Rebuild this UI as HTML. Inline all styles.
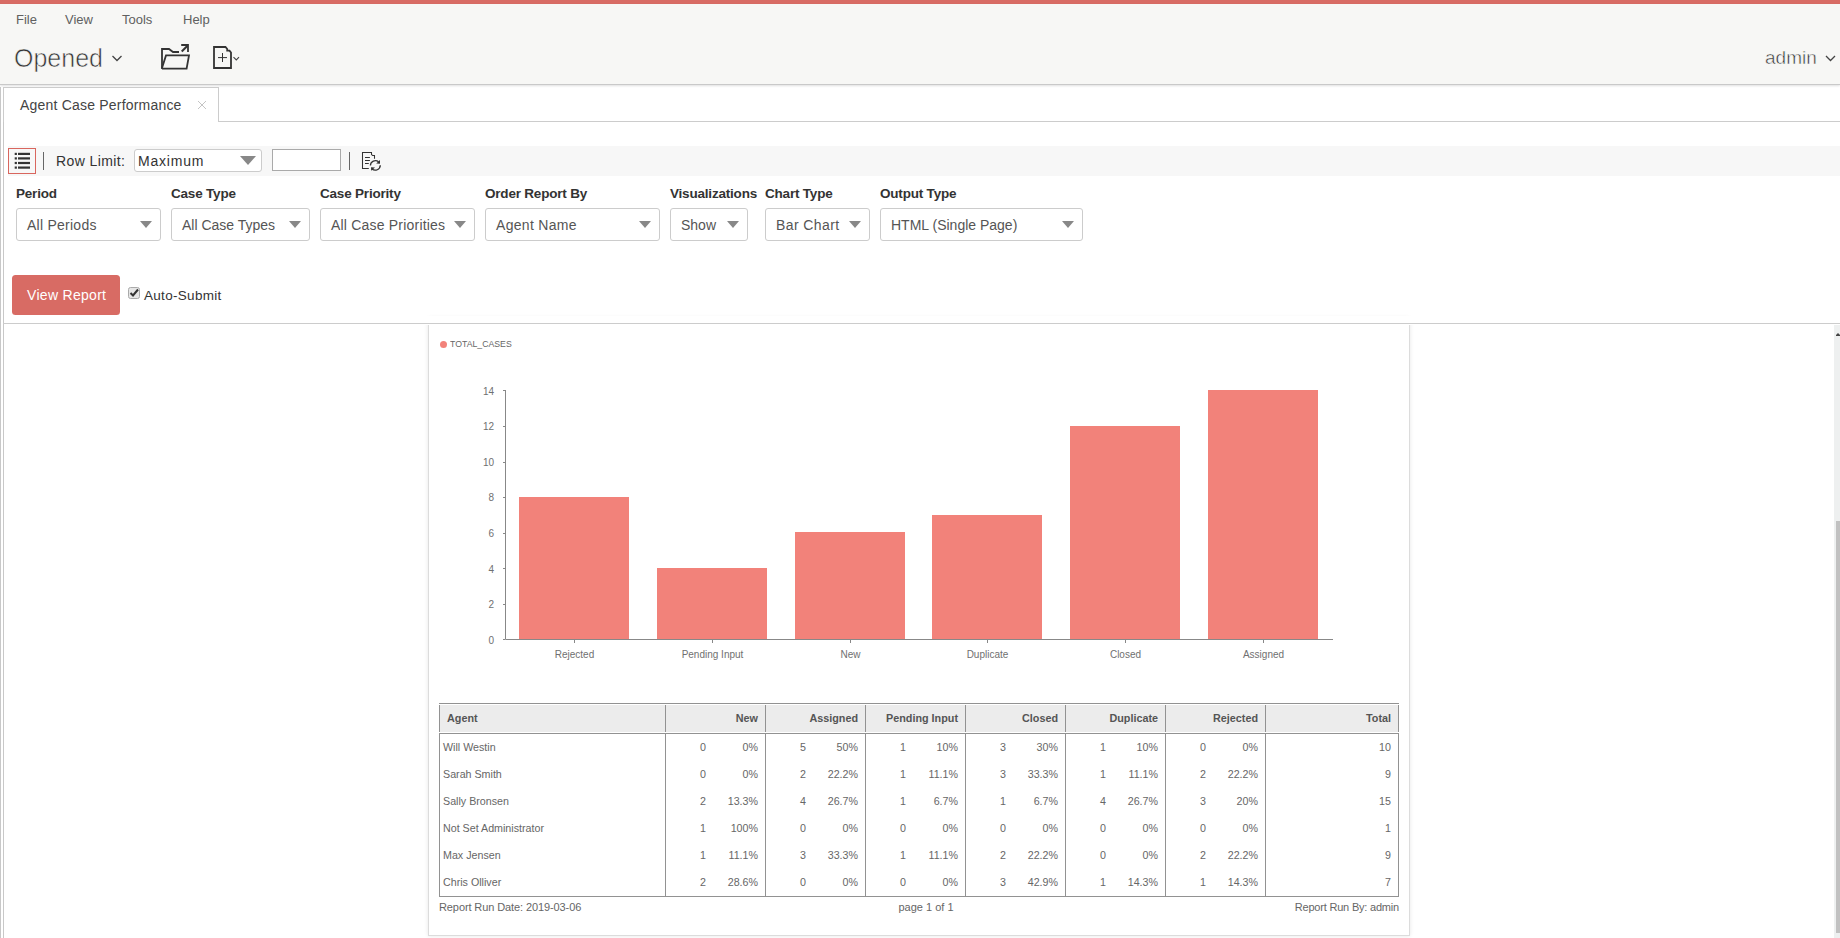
<!DOCTYPE html>
<html><head><meta charset="utf-8">
<style>
*{margin:0;padding:0;box-sizing:border-box}
html,body{width:1840px;height:938px;overflow:hidden;background:#fff;font-family:"Liberation Sans",sans-serif;color:#333}
.a{position:absolute;white-space:nowrap;line-height:1}
#topbar{position:absolute;left:0;top:0;width:1840px;height:4px;background:#d86b64}
#hdr{position:absolute;left:0;top:4px;width:1840px;height:81px;background:#f7f7f5;border-bottom:1px solid #c9c9c9;box-shadow:0 1px 2px rgba(0,0,0,.12)}
.menu{font-size:13px;color:#606060}
.sel{position:absolute;background:#fff;border:1px solid #ccc;border-radius:3px}
.sel .t{position:absolute;white-space:nowrap;line-height:1;font-size:14px;color:#555}
.tri{position:absolute;width:0;height:0;border-left:6px solid transparent;border-right:6px solid transparent;border-top:7px solid #888}
.lbl{font-size:13.5px;font-weight:bold;color:#333;letter-spacing:-0.2px}
</style></head><body>
<div id="topbar"></div>
<div id="hdr"></div>
<div class="a menu" style="left:16px;top:13px">File</div>
<div class="a menu" style="left:65px;top:13px">View</div>
<div class="a menu" style="left:122px;top:13px">Tools</div>
<div class="a menu" style="left:183px;top:13px">Help</div>
<div class="a" style="left:14px;top:45.5px;font-size:25px;color:#333;-webkit-text-stroke:0.6px #f7f7f5">Opened</div>
<svg class="a" style="left:110px;top:53px" width="14" height="10" viewBox="0 0 14 10"><path d="M2.5 3 L7 7.5 L11.5 3" fill="none" stroke="#444" stroke-width="1.3"/></svg>
<!-- folder icon -->
<svg class="a" style="left:158px;top:42px" width="34" height="30" viewBox="0 0 34 30">
<path d="M4 27 V7 H11 L15 10 H21" fill="none" stroke="#333" stroke-width="1.8" stroke-linejoin="miter"/>
<path d="M4 26.6 H28.6 L31 13.4 H8 L4 26" fill="none" stroke="#333" stroke-width="1.8" stroke-linejoin="miter"/>
<path d="M23.7 9.5 L29.5 3.7" fill="none" stroke="#333" stroke-width="2"/>
<path d="M23.2 3 H30 V10" fill="none" stroke="#333" stroke-width="1.8"/>
</svg>
<!-- new doc icon -->
<svg class="a" style="left:210px;top:42px" width="34" height="30" viewBox="0 0 34 30">
<path d="M4 26 V5 H15.5 L17.2 7 V8.7 H19.5 L21 10.5 V26 Z" fill="none" stroke="#333" stroke-width="1.8" stroke-linejoin="miter"/>
<path d="M8 15.6 H17 M12.5 11 V20" fill="none" stroke="#333" stroke-width="1"/>
<path d="M23.5 15.2 L26.3 18 L29 15.2" fill="none" stroke="#444" stroke-width="1.1"/>
</svg>
<div class="a" style="left:1765px;top:48px;font-size:19px;color:#333;-webkit-text-stroke:0.5px #f7f7f5">admin</div>
<svg class="a" style="left:1823px;top:52px" width="14" height="12" viewBox="0 0 14 12"><path d="M3 4 L7.5 8.5 L12 4" fill="none" stroke="#444" stroke-width="1.3"/></svg>

<!-- left page borders -->
<div style="position:absolute;left:0;top:87px;width:1px;height:851px;background:#c8c8c8"></div>
<div style="position:absolute;left:3px;top:87px;width:1px;height:851px;background:#c8c8c8"></div>

<!-- tab -->
<div style="position:absolute;left:3px;top:87px;width:216px;height:35px;border:1px solid #ccc;border-bottom:none;background:#fff"></div>
<div style="position:absolute;left:218px;top:121px;width:1622px;height:1px;background:#ccc"></div>
<div class="a" style="left:20px;top:98px;font-size:14px;color:#444;letter-spacing:0.2px">Agent Case Performance</div>
<svg class="a" style="left:197px;top:100px" width="10" height="10" viewBox="0 0 10 10"><path d="M1 1 L9 9 M9 1 L1 9" stroke="#c4c4c4" stroke-width="1"/></svg>

<!-- toolbar -->
<div style="position:absolute;left:8px;top:146px;width:1832px;height:30px;background:#f7f7f7"></div>
<div style="position:absolute;left:8px;top:148px;width:28px;height:26px;border:1px solid #d9665e"></div>
<svg class="a" style="left:13px;top:152px" width="18" height="18" viewBox="0 0 18 18">
<g fill="#333"><rect x="1.7" y="0.8" width="2.2" height="2.2"/><rect x="5" y="0.8" width="12" height="2.2"/>
<rect x="1.7" y="5.3" width="2.2" height="2.2"/><rect x="5" y="5.3" width="12" height="2.2"/>
<rect x="1.7" y="9.9" width="2.2" height="2.2"/><rect x="5" y="9.9" width="12" height="2.2"/>
<rect x="1.7" y="14.5" width="2.2" height="2.2"/><rect x="5" y="14.5" width="12" height="2.2"/></g></svg>
<div style="position:absolute;left:43px;top:152px;width:1px;height:18px;background:#666"></div>
<div class="a" style="left:56px;top:154px;font-size:14px;color:#333;letter-spacing:0.4px">Row Limit:</div>
<div class="sel" style="left:134px;top:149px;width:128px;height:23px"><div class="t" style="left:3px;top:4px;color:#333;letter-spacing:0.8px">Maximum</div><div class="tri" style="left:105px;top:6px;border-left-width:8px;border-right-width:8px;border-top-width:9px"></div></div>
<div style="position:absolute;left:272px;top:149px;width:69px;height:22px;border:1px solid #aaa;background:#fff"></div>
<div style="position:absolute;left:349px;top:152px;width:1px;height:18px;background:#666"></div>
<svg class="a" style="left:360px;top:150px" width="24" height="24" viewBox="0 0 24 24">
<path d="M8.8 18.5 H2.5 V2.5 H11.5 V4.6 L12.6 5.5 H14.5 V8.8" fill="none" stroke="#333" stroke-width="1.05" stroke-linejoin="miter"/>
<path d="M5 7.5 H9.9 M5 10.5 H9.9 M5 13.5 H8.8" stroke="#333" stroke-width="1.05"/>
<path d="M10.4 15.6 A5 5 0 0 1 18.6 11.8" fill="none" stroke="#333" stroke-width="1.3"/>
<path d="M16.2 13.6 L20 10 L20 13.7 Z" fill="#333"/>
<path d="M20.3 15.3 A5 5 0 0 1 12 18.9" fill="none" stroke="#333" stroke-width="1.3"/>
<path d="M11 17.3 L15 17.4 L11.2 20.8 Z" fill="#333"/>
</svg>

<!-- filters -->
<div class="a lbl" style="left:16px;top:187px">Period</div>
<div class="sel" style="left:16px;top:208px;width:145px;height:33px"><div class="t" style="left:10px;top:9px;letter-spacing:0.25px">All Periods</div><div class="tri" style="left:123px;top:12px"></div></div>
<div class="a lbl" style="left:171px;top:187px">Case Type</div>
<div class="sel" style="left:171px;top:208px;width:139px;height:33px"><div class="t" style="left:10px;top:9px">All Case Types</div><div class="tri" style="left:117px;top:12px"></div></div>
<div class="a lbl" style="left:320px;top:187px">Case Priority</div>
<div class="sel" style="left:320px;top:208px;width:155px;height:33px"><div class="t" style="left:10px;top:9px;letter-spacing:0.2px">All Case Priorities</div><div class="tri" style="left:133px;top:12px"></div></div>
<div class="a lbl" style="left:485px;top:187px">Order Report By</div>
<div class="sel" style="left:485px;top:208px;width:175px;height:33px"><div class="t" style="left:10px;top:9px;letter-spacing:0.3px">Agent Name</div><div class="tri" style="left:153px;top:12px"></div></div>
<div class="a lbl" style="left:670px;top:187px">Visualizations</div>
<div class="sel" style="left:670px;top:208px;width:78px;height:33px"><div class="t" style="left:10px;top:9px">Show</div><div class="tri" style="left:56px;top:12px"></div></div>
<div class="a lbl" style="left:765px;top:187px">Chart Type</div>
<div class="sel" style="left:765px;top:208px;width:105px;height:33px"><div class="t" style="left:10px;top:9px;letter-spacing:0.4px">Bar Chart</div><div class="tri" style="left:83px;top:12px"></div></div>
<div class="a lbl" style="left:880px;top:187px">Output Type</div>
<div class="sel" style="left:880px;top:208px;width:203px;height:33px"><div class="t" style="left:10px;top:9px">HTML (Single Page)</div><div class="tri" style="left:181px;top:12px"></div></div>

<!-- button -->
<div style="position:absolute;left:12px;top:275px;width:108px;height:40px;background:#d86b64;border-radius:3.5px"></div>
<div class="a" style="left:27px;top:288px;font-size:14px;color:#fff;letter-spacing:0.3px">View Report</div>
<svg class="a" style="left:127px;top:286px" width="14" height="14" viewBox="0 0 14 14">
<rect x="1.5" y="1.5" width="11" height="11" rx="2" fill="#e6e6e6" stroke="#aaa" stroke-width="1"/>
<path d="M3.5 7 L6 9.5 L11 3.5" fill="none" stroke="#333" stroke-width="2"/></svg>
<div class="a" style="left:144px;top:289px;font-size:13.5px;color:#333;letter-spacing:0.3px">Auto-Submit</div>
<!-- REPORT -->
<div style="position:absolute;left:428px;top:318px;width:982px;height:618px;border:1px solid #dcdcdc;box-shadow:0 0 4px rgba(0,0,0,.10);background:#fff"></div>
<div style="position:absolute;left:4px;top:316px;width:1836px;height:9px;background:#fff"></div>
<div style="position:absolute;left:3px;top:323px;width:1837px;height:1px;background:#ccc"></div>
<div style="position:absolute;left:1834px;top:325px;width:6px;height:613px;background:#eef0f0"></div>
<div style="position:absolute;left:1836px;top:521px;width:4px;height:412px;background:#c1c1c1"></div>
<svg class="a" style="left:1836px;top:331px" width="4" height="6" viewBox="0 0 4 6"><path d="M2 2 L5 5 H-1 Z" fill="#444"/></svg>
<div style="position:absolute;left:440px;top:341px;width:7px;height:7px;border-radius:50%;background:#f2827a"></div>
<div class="a" style="left:450px;top:339.4px;font-size:9.4px;color:#666;transform:scaleX(0.93);transform-origin:0 0">TOTAL_CASES</div>
<svg class="a" style="left:0;top:0" width="1840" height="938" viewBox="0 0 1840 938">
<rect x="519" y="497" width="110" height="142" fill="#f2827a"/>
<rect x="657" y="568" width="110" height="71" fill="#f2827a"/>
<rect x="795" y="532" width="110" height="107" fill="#f2827a"/>
<rect x="932" y="515" width="110" height="124" fill="#f2827a"/>
<rect x="1070" y="426" width="110" height="213" fill="#f2827a"/>
<rect x="1208" y="390" width="110" height="249" fill="#f2827a"/>
<path d="M505.5 390 V639.5 H1333" fill="none" stroke="#888" stroke-width="1"/>
<path d="M503 639.5 H505" stroke="#888" stroke-width="1"/>
<text x="494" y="643.7" text-anchor="end" font-family="Liberation Sans" font-size="10" fill="#707070">0</text>
<path d="M503 604.5 H505" stroke="#888" stroke-width="1"/>
<text x="494" y="608.1" text-anchor="end" font-family="Liberation Sans" font-size="10" fill="#707070">2</text>
<path d="M503 568.5 H505" stroke="#888" stroke-width="1"/>
<text x="494" y="572.5" text-anchor="end" font-family="Liberation Sans" font-size="10" fill="#707070">4</text>
<path d="M503 533.5 H505" stroke="#888" stroke-width="1"/>
<text x="494" y="537.0" text-anchor="end" font-family="Liberation Sans" font-size="10" fill="#707070">6</text>
<path d="M503 497.5 H505" stroke="#888" stroke-width="1"/>
<text x="494" y="501.4" text-anchor="end" font-family="Liberation Sans" font-size="10" fill="#707070">8</text>
<path d="M503 462.5 H505" stroke="#888" stroke-width="1"/>
<text x="494" y="465.8" text-anchor="end" font-family="Liberation Sans" font-size="10" fill="#707070">10</text>
<path d="M503 426.5 H505" stroke="#888" stroke-width="1"/>
<text x="494" y="430.2" text-anchor="end" font-family="Liberation Sans" font-size="10" fill="#707070">12</text>
<path d="M503 390.5 H505" stroke="#888" stroke-width="1"/>
<text x="494" y="394.6" text-anchor="end" font-family="Liberation Sans" font-size="10" fill="#707070">14</text>
<path d="M574.5 639 V643" stroke="#888" stroke-width="1"/>
<text x="574.5" y="657.8" text-anchor="middle" font-family="Liberation Sans" font-size="10" fill="#707070">Rejected</text>
<path d="M712.5 639 V643" stroke="#888" stroke-width="1"/>
<text x="712.5" y="657.8" text-anchor="middle" font-family="Liberation Sans" font-size="10" fill="#707070">Pending Input</text>
<path d="M850.5 639 V643" stroke="#888" stroke-width="1"/>
<text x="850.5" y="657.8" text-anchor="middle" font-family="Liberation Sans" font-size="10" fill="#707070">New</text>
<path d="M987.5 639 V643" stroke="#888" stroke-width="1"/>
<text x="987.5" y="657.8" text-anchor="middle" font-family="Liberation Sans" font-size="10" fill="#707070">Duplicate</text>
<path d="M1125.5 639 V643" stroke="#888" stroke-width="1"/>
<text x="1125.5" y="657.8" text-anchor="middle" font-family="Liberation Sans" font-size="10" fill="#707070">Closed</text>
<path d="M1263.5 639 V643" stroke="#888" stroke-width="1"/>
<text x="1263.5" y="657.8" text-anchor="middle" font-family="Liberation Sans" font-size="10" fill="#707070">Assigned</text>
</svg>
<div style="position:absolute;left:439px;top:703px;width:960px;height:1px;background:#929292"></div>
<div style="position:absolute;left:440px;top:705px;width:958px;height:27px;background:#ececec"></div>
<div style="position:absolute;left:439px;top:705px;width:1px;height:27px;background:#929292"></div>
<div style="position:absolute;left:439px;top:733px;width:1px;height:164px;background:#929292"></div>
<div style="position:absolute;left:665px;top:705px;width:1px;height:27px;background:#929292"></div>
<div style="position:absolute;left:665px;top:733px;width:1px;height:164px;background:#929292"></div>
<div style="position:absolute;left:765px;top:705px;width:1px;height:27px;background:#929292"></div>
<div style="position:absolute;left:765px;top:733px;width:1px;height:164px;background:#929292"></div>
<div style="position:absolute;left:865px;top:705px;width:1px;height:27px;background:#929292"></div>
<div style="position:absolute;left:865px;top:733px;width:1px;height:164px;background:#929292"></div>
<div style="position:absolute;left:965px;top:705px;width:1px;height:27px;background:#929292"></div>
<div style="position:absolute;left:965px;top:733px;width:1px;height:164px;background:#929292"></div>
<div style="position:absolute;left:1065px;top:705px;width:1px;height:27px;background:#929292"></div>
<div style="position:absolute;left:1065px;top:733px;width:1px;height:164px;background:#929292"></div>
<div style="position:absolute;left:1165px;top:705px;width:1px;height:27px;background:#929292"></div>
<div style="position:absolute;left:1165px;top:733px;width:1px;height:164px;background:#929292"></div>
<div style="position:absolute;left:1265px;top:705px;width:1px;height:27px;background:#929292"></div>
<div style="position:absolute;left:1265px;top:733px;width:1px;height:164px;background:#929292"></div>
<div style="position:absolute;left:1398px;top:705px;width:1px;height:27px;background:#929292"></div>
<div style="position:absolute;left:1398px;top:733px;width:1px;height:164px;background:#929292"></div>
<div style="position:absolute;left:439px;top:733px;width:960px;height:1px;background:#929292"></div>
<div style="position:absolute;left:439px;top:896px;width:960px;height:1px;background:#929292"></div>
<div class="a" style="left:447px;top:712.7px;font-size:10.8px;font-weight:bold;color:#555;">Agent</div>
<div class="a" style="right:1082px;top:712.7px;font-size:10.8px;font-weight:bold;color:#555;">New</div>
<div class="a" style="right:982px;top:712.7px;font-size:10.8px;font-weight:bold;color:#555;">Assigned</div>
<div class="a" style="right:882px;top:712.7px;font-size:10.8px;font-weight:bold;color:#555;">Pending Input</div>
<div class="a" style="right:782px;top:712.7px;font-size:10.8px;font-weight:bold;color:#555;">Closed</div>
<div class="a" style="right:682px;top:712.7px;font-size:10.8px;font-weight:bold;color:#555;">Duplicate</div>
<div class="a" style="right:582px;top:712.7px;font-size:10.8px;font-weight:bold;color:#555;">Rejected</div>
<div class="a" style="right:449px;top:712.7px;font-size:10.8px;font-weight:bold;color:#555;">Total</div>
<div class="a" style="left:443px;top:742.3px;font-size:10.7px;color:#666;">Will Westin</div>
<div class="a" style="right:1134px;top:742.3px;font-size:10.7px;color:#666;">0</div>
<div class="a" style="right:1082px;top:742.3px;font-size:10.7px;color:#666;">0%</div>
<div class="a" style="right:1034px;top:742.3px;font-size:10.7px;color:#666;">5</div>
<div class="a" style="right:982px;top:742.3px;font-size:10.7px;color:#666;">50%</div>
<div class="a" style="right:934px;top:742.3px;font-size:10.7px;color:#666;">1</div>
<div class="a" style="right:882px;top:742.3px;font-size:10.7px;color:#666;">10%</div>
<div class="a" style="right:834px;top:742.3px;font-size:10.7px;color:#666;">3</div>
<div class="a" style="right:782px;top:742.3px;font-size:10.7px;color:#666;">30%</div>
<div class="a" style="right:734px;top:742.3px;font-size:10.7px;color:#666;">1</div>
<div class="a" style="right:682px;top:742.3px;font-size:10.7px;color:#666;">10%</div>
<div class="a" style="right:634px;top:742.3px;font-size:10.7px;color:#666;">0</div>
<div class="a" style="right:582px;top:742.3px;font-size:10.7px;color:#666;">0%</div>
<div class="a" style="right:449px;top:742.3px;font-size:10.7px;color:#666;">10</div>
<div class="a" style="left:443px;top:769.3px;font-size:10.7px;color:#666;">Sarah Smith</div>
<div class="a" style="right:1134px;top:769.3px;font-size:10.7px;color:#666;">0</div>
<div class="a" style="right:1082px;top:769.3px;font-size:10.7px;color:#666;">0%</div>
<div class="a" style="right:1034px;top:769.3px;font-size:10.7px;color:#666;">2</div>
<div class="a" style="right:982px;top:769.3px;font-size:10.7px;color:#666;">22.2%</div>
<div class="a" style="right:934px;top:769.3px;font-size:10.7px;color:#666;">1</div>
<div class="a" style="right:882px;top:769.3px;font-size:10.7px;color:#666;">11.1%</div>
<div class="a" style="right:834px;top:769.3px;font-size:10.7px;color:#666;">3</div>
<div class="a" style="right:782px;top:769.3px;font-size:10.7px;color:#666;">33.3%</div>
<div class="a" style="right:734px;top:769.3px;font-size:10.7px;color:#666;">1</div>
<div class="a" style="right:682px;top:769.3px;font-size:10.7px;color:#666;">11.1%</div>
<div class="a" style="right:634px;top:769.3px;font-size:10.7px;color:#666;">2</div>
<div class="a" style="right:582px;top:769.3px;font-size:10.7px;color:#666;">22.2%</div>
<div class="a" style="right:449px;top:769.3px;font-size:10.7px;color:#666;">9</div>
<div class="a" style="left:443px;top:796.3px;font-size:10.7px;color:#666;">Sally Bronsen</div>
<div class="a" style="right:1134px;top:796.3px;font-size:10.7px;color:#666;">2</div>
<div class="a" style="right:1082px;top:796.3px;font-size:10.7px;color:#666;">13.3%</div>
<div class="a" style="right:1034px;top:796.3px;font-size:10.7px;color:#666;">4</div>
<div class="a" style="right:982px;top:796.3px;font-size:10.7px;color:#666;">26.7%</div>
<div class="a" style="right:934px;top:796.3px;font-size:10.7px;color:#666;">1</div>
<div class="a" style="right:882px;top:796.3px;font-size:10.7px;color:#666;">6.7%</div>
<div class="a" style="right:834px;top:796.3px;font-size:10.7px;color:#666;">1</div>
<div class="a" style="right:782px;top:796.3px;font-size:10.7px;color:#666;">6.7%</div>
<div class="a" style="right:734px;top:796.3px;font-size:10.7px;color:#666;">4</div>
<div class="a" style="right:682px;top:796.3px;font-size:10.7px;color:#666;">26.7%</div>
<div class="a" style="right:634px;top:796.3px;font-size:10.7px;color:#666;">3</div>
<div class="a" style="right:582px;top:796.3px;font-size:10.7px;color:#666;">20%</div>
<div class="a" style="right:449px;top:796.3px;font-size:10.7px;color:#666;">15</div>
<div class="a" style="left:443px;top:823.3px;font-size:10.7px;color:#666;">Not Set Administrator</div>
<div class="a" style="right:1134px;top:823.3px;font-size:10.7px;color:#666;">1</div>
<div class="a" style="right:1082px;top:823.3px;font-size:10.7px;color:#666;">100%</div>
<div class="a" style="right:1034px;top:823.3px;font-size:10.7px;color:#666;">0</div>
<div class="a" style="right:982px;top:823.3px;font-size:10.7px;color:#666;">0%</div>
<div class="a" style="right:934px;top:823.3px;font-size:10.7px;color:#666;">0</div>
<div class="a" style="right:882px;top:823.3px;font-size:10.7px;color:#666;">0%</div>
<div class="a" style="right:834px;top:823.3px;font-size:10.7px;color:#666;">0</div>
<div class="a" style="right:782px;top:823.3px;font-size:10.7px;color:#666;">0%</div>
<div class="a" style="right:734px;top:823.3px;font-size:10.7px;color:#666;">0</div>
<div class="a" style="right:682px;top:823.3px;font-size:10.7px;color:#666;">0%</div>
<div class="a" style="right:634px;top:823.3px;font-size:10.7px;color:#666;">0</div>
<div class="a" style="right:582px;top:823.3px;font-size:10.7px;color:#666;">0%</div>
<div class="a" style="right:449px;top:823.3px;font-size:10.7px;color:#666;">1</div>
<div class="a" style="left:443px;top:850.3px;font-size:10.7px;color:#666;">Max Jensen</div>
<div class="a" style="right:1134px;top:850.3px;font-size:10.7px;color:#666;">1</div>
<div class="a" style="right:1082px;top:850.3px;font-size:10.7px;color:#666;">11.1%</div>
<div class="a" style="right:1034px;top:850.3px;font-size:10.7px;color:#666;">3</div>
<div class="a" style="right:982px;top:850.3px;font-size:10.7px;color:#666;">33.3%</div>
<div class="a" style="right:934px;top:850.3px;font-size:10.7px;color:#666;">1</div>
<div class="a" style="right:882px;top:850.3px;font-size:10.7px;color:#666;">11.1%</div>
<div class="a" style="right:834px;top:850.3px;font-size:10.7px;color:#666;">2</div>
<div class="a" style="right:782px;top:850.3px;font-size:10.7px;color:#666;">22.2%</div>
<div class="a" style="right:734px;top:850.3px;font-size:10.7px;color:#666;">0</div>
<div class="a" style="right:682px;top:850.3px;font-size:10.7px;color:#666;">0%</div>
<div class="a" style="right:634px;top:850.3px;font-size:10.7px;color:#666;">2</div>
<div class="a" style="right:582px;top:850.3px;font-size:10.7px;color:#666;">22.2%</div>
<div class="a" style="right:449px;top:850.3px;font-size:10.7px;color:#666;">9</div>
<div class="a" style="left:443px;top:877.3px;font-size:10.7px;color:#666;">Chris Olliver</div>
<div class="a" style="right:1134px;top:877.3px;font-size:10.7px;color:#666;">2</div>
<div class="a" style="right:1082px;top:877.3px;font-size:10.7px;color:#666;">28.6%</div>
<div class="a" style="right:1034px;top:877.3px;font-size:10.7px;color:#666;">0</div>
<div class="a" style="right:982px;top:877.3px;font-size:10.7px;color:#666;">0%</div>
<div class="a" style="right:934px;top:877.3px;font-size:10.7px;color:#666;">0</div>
<div class="a" style="right:882px;top:877.3px;font-size:10.7px;color:#666;">0%</div>
<div class="a" style="right:834px;top:877.3px;font-size:10.7px;color:#666;">3</div>
<div class="a" style="right:782px;top:877.3px;font-size:10.7px;color:#666;">42.9%</div>
<div class="a" style="right:734px;top:877.3px;font-size:10.7px;color:#666;">1</div>
<div class="a" style="right:682px;top:877.3px;font-size:10.7px;color:#666;">14.3%</div>
<div class="a" style="right:634px;top:877.3px;font-size:10.7px;color:#666;">1</div>
<div class="a" style="right:582px;top:877.3px;font-size:10.7px;color:#666;">14.3%</div>
<div class="a" style="right:449px;top:877.3px;font-size:10.7px;color:#666;">7</div>
<div class="a" style="left:439px;top:901.7px;font-size:11px;color:#666;letter-spacing:-0.1px">Report Run Date: 2019-03-06</div>
<div class="a" style="left:726px;width:400px;text-align:center;top:901.7px;font-size:11px;color:#666;">page 1 of 1</div>
<div class="a" style="right:441px;top:901.7px;font-size:11px;color:#666;letter-spacing:-0.2px">Report Run By: admin</div>
</body></html>
